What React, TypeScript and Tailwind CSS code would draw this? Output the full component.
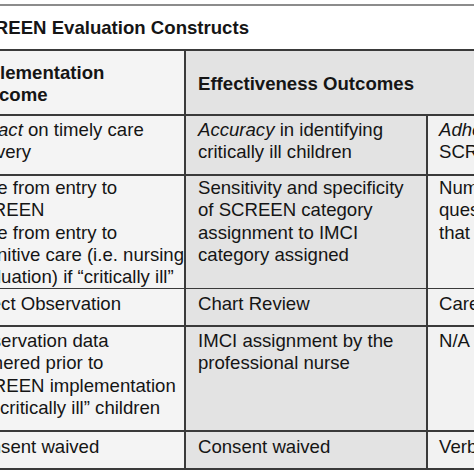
import React from "react";

const font = { fontFamily: '"Liberation Sans", Arial, sans-serif' };

export default function App() {
  return (
    <div className="w-[474px] h-[474px] overflow-hidden bg-white text-[#151515]" style={font}>
      <div className="ml-[-45px] w-[720px] pt-[4px] text-[18.6px] leading-[22.3px]">
        {/* Title */}
        <div className="h-[45px] border-t-2 border-[#8c8c8c] bg-white pt-[11px] pl-[14px] font-bold whitespace-nowrap">
          SCREEN Evaluation Constructs
        </div>
        {/* Header */}
        <div className="h-[65px] border-t-2 border-[#3a3a3a] grid grid-cols-[229px_1fr] font-bold whitespace-nowrap">
          <div className="bg-[#f4f4f4] pl-[12px] pt-[11px]">
            Implementation
            <br />
            Outcome
          </div>
          <div className="bg-[#e3e3e3] border-l-2 border-[#3a3a3a] pl-[12px] pt-[22px]">
            Effectiveness Outcomes
          </div>
        </div>
        {/* Row 1 */}
        <Row h="h-[60px]" pt="pt-[3px]"
          a={<><i>Impact</i> on timely care<br />delivery</>}
          b={<><i>Accuracy</i> in identifying<br />critically ill children</>}
          c={<><i>Adherence</i> to<br />SCREEN protocol</>}
        />
        {/* Row 2 */}
        <Row h="h-[113px]" pt="pt-[1px]"
          a={<>Time from entry to<br />SCREEN<br />Time from entry to<br />definitive care (i.e. nursing<br />evaluation) if “critically ill”</>}
          b={<>Sensitivity and specificity<br />of SCREEN category<br />assignment to IMCI<br />category assigned</>}
          c={<>Number of SCREEN<br />questions completed<br />that were accurate</>}
        />
        {/* Row 3 */}
        <Row h="h-[38px]" pt="pt-[4px]"
          a={<>Direct Observation</>}
          b={<>Chart Review</>}
          c={<>Caregiver Interview</>}
        />
        {/* Row 4 */}
        <Row h="h-[105px]" pt="pt-[3px]"
          a={<>Observation data<br />gathered prior to<br />SCREEN implementation<br />for “critically ill” children</>}
          b={<>IMCI assignment by the<br />professional nurse</>}
          c={<>N/A</>}
        />
        {/* Row 5 */}
        <Row h="h-[40px]" pt="pt-[4px]" last
          a={<>Consent waived</>}
          b={<>Consent waived</>}
          c={<>Verbal consent</>}
        />
      </div>
    </div>
  );
}

function Row({
  h,
  pt,
  a,
  b,
  c,
  last,
}: {
  h: string;
  pt: string;
  a: React.ReactNode;
  b: React.ReactNode;
  c: React.ReactNode;
  last?: boolean;
}) {
  return (
    <div
      className={`${h} border-t-2 ${last ? "border-b-2" : ""} border-[#3a3a3a] grid grid-cols-[229px_242px_1fr] whitespace-nowrap`}
    >
      <div className={`bg-[#f4f4f4] pl-[12px] ${pt}`}>{a}</div>
      <div className={`bg-[#e3e3e3] border-l-2 border-[#3a3a3a] pl-[12px] ${pt}`}>{b}</div>
      <div className={`bg-[#f2f2f2] border-l-2 border-[#3a3a3a] pl-[11px] ${pt}`}>{c}</div>
    </div>
  );
}
